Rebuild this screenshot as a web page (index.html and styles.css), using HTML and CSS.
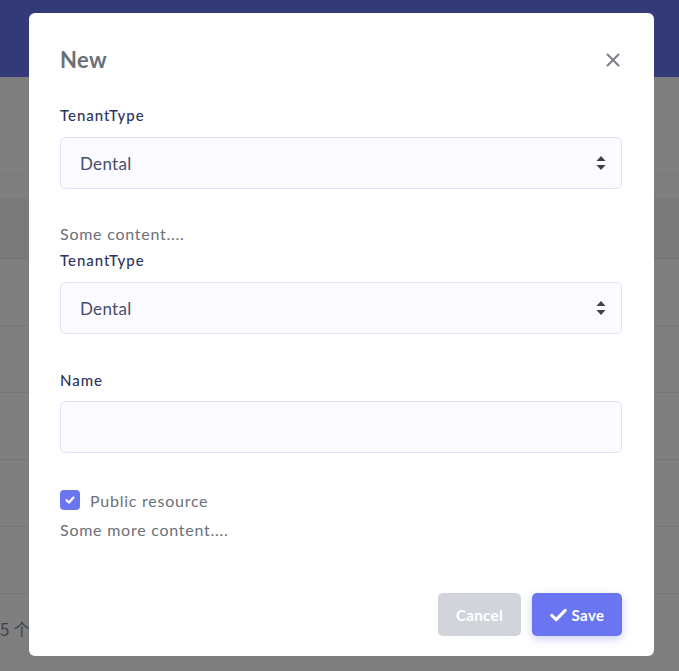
FILE: index.html
```html
<!DOCTYPE html>
<html lang="en">
<head>
<meta charset="utf-8">
<title>New</title>
<link rel="stylesheet" href="styles.css">
</head>
<body>
<div class="page">
  <div class="topbar"></div>
  <div class="table">
    <div class="row r1"></div>
    <div class="row r2"></div>
    <div class="row head"></div>
    <div class="row"></div>
    <div class="row"></div>
    <div class="row"></div>
    <div class="row"></div>
    <div class="row"></div>
    <div class="footer">5 个</div>
  </div>
</div>

<div class="modal">
  <div class="modal-header">
    <h2 class="modal-title">New</h2>
    <button class="close" aria-label="Close">
      <svg width="14" height="14" viewBox="0 0 14 14"><path d="M1.5 1.5 L12.5 12.5 M12.5 1.5 L1.5 12.5" stroke="#7a7f86" stroke-width="2" stroke-linecap="round"/></svg>
    </button>
  </div>
  <div class="modal-body">
    <label class="label">TenantType</label>
    <div class="select">
      <span>Dental</span>
      <svg class="arrows" width="10" height="16" viewBox="0 0 10 16"><path d="M5 1 L9.5 6 H0.5 Z M5 15 L9.5 10 H0.5 Z" fill="#3d4048"/></svg>
    </div>
    <p class="content first">Some content....</p>
    <label class="label">TenantType</label>
    <div class="select">
      <span>Dental</span>
      <svg class="arrows" width="10" height="16" viewBox="0 0 10 16"><path d="M5 1 L9.5 6 H0.5 Z M5 15 L9.5 10 H0.5 Z" fill="#3d4048"/></svg>
    </div>
    <label class="label name-label">Name</label>
    <div class="input"></div>
    <div class="check-row">
      <span class="checkbox">
        <svg width="12" height="12" viewBox="0 0 12 12"><path d="M2.5 6.2 L5 8.5 L9.5 3.5" stroke="#fff" stroke-width="2.2" fill="none" stroke-linecap="round" stroke-linejoin="round"/></svg>
      </span>
      <span class="check-label">Public resource</span>
    </div>
    <p class="content more">Some more content....</p>
  </div>
  <div class="modal-footer">
    <button class="btn cancel">Cancel</button>
    <button class="btn save">
      <svg width="17" height="14" viewBox="0 0 17 14"><path d="M1.8 7.4 L6.2 11.6 L15.2 2.4" stroke="#fff" stroke-width="3" fill="none" stroke-linecap="round" stroke-linejoin="round"/></svg>
      Save
    </button>
  </div>
</div>
</body>
</html>
```

FILE: styles.css
```css
* { box-sizing: border-box; }
html, body {
  margin: 0;
  padding: 0;
  height: 100%;
  font-family: Lato, "Noto Sans", sans-serif;
}
body {
  background: #7f7f7f;
  overflow: hidden;
}
.page {
  height: 671px;
  background: #7f7f7f;
}
.topbar {
  height: 77px;
  background: #343a78;
}
.table {
  display: flex;
  flex-direction: column;
}
.row {
  height: 67px;
  border-bottom: 1px solid #767676;
}
.row.r1 { height: 99px; border-bottom: 1px solid #7b7b7b; }
.row.r2 { height: 22px; border-bottom: none; }
.row.head { height: 61px; background: #7a7a7a; }
.footer {
  padding-top: 22px;
  font-size: 17px;
  color: #3e4450;
  font-family: "Noto Sans CJK SC", Lato, sans-serif;
}

.modal {
  position: absolute;
  left: 29px;
  top: 13px;
  width: 625px;
  height: 643px;
  background: #fff;
  border-radius: 6px;
  padding: 32px 32px 20px 31px;
  display: flex;
  flex-direction: column;
}
.modal-header {
  display: flex;
  align-items: center;
  justify-content: space-between;
  height: 30px;
}
.modal-title {
  margin: 0;
  font-size: 22px;
  font-weight: 700;
  color: #6b7079;
  line-height: 30px;
  letter-spacing: 0.4px;
}
.close {
  border: 0;
  background: none;
  padding: 0;
  margin-right: 1px;
  width: 16px;
  height: 16px;
  display: flex;
  align-items: center;
  justify-content: center;
  cursor: pointer;
}
.modal-body {
  display: flex;
  flex-direction: column;
  padding-top: 30px;
}
.label {
  display: block;
  font-size: 15px;
  line-height: 20px;
  font-weight: 500;
  color: #2e3460;
  letter-spacing: 0.95px;
  margin-bottom: 12px;
}
.select, .input {
  height: 52px;
  background: #fafaff;
  border: 1px solid #e3e3f8;
  border-radius: 5px;
}
.select {
  display: flex;
  align-items: center;
  justify-content: space-between;
  padding: 0 15px 0 19px;
  font-size: 17px;
  letter-spacing: 0.3px;
  color: #474d6e;
}
.arrows { display: block; }
.content {
  margin: 0;
  font-size: 16px;
  line-height: 24px;
  letter-spacing: 0.75px;
  color: #6c7078;
}
.content.first {
  margin-top: 33px;
  margin-bottom: 4px;
}
.name-label {
  margin-top: 36px;
  margin-bottom: 11px;
}
.input { height: 52px; }
.check-row {
  display: flex;
  align-items: center;
  gap: 10px;
  margin-top: 35px;
  height: 24px;
}
.checkbox {
  width: 20px;
  height: 20px;
  border-radius: 4px;
  background: #6a76f0;
  display: flex;
  align-items: center;
  justify-content: center;
}
.check-label {
  font-size: 16px;
  letter-spacing: 0.75px;
  color: #6c7078;
}
.content.more {
  margin-top: 6px;
}
.modal-footer {
  margin-top: auto;
  display: flex;
  justify-content: flex-end;
  gap: 11px;
}
.btn {
  height: 43px;
  border: 0;
  border-radius: 5px;
  color: #fff;
  font-family: Lato, "Noto Sans", sans-serif;
  font-size: 15px;
  font-weight: 700;
  letter-spacing: 0.4px;
  display: flex;
  align-items: center;
  justify-content: center;
  gap: 5px;
}
.cancel {
  width: 83px;
  background: #d1d5db;
}
.save {
  width: 90px;
  background: #6a76f1;
  box-shadow: 0 3px 8px rgba(106, 118, 241, 0.35);
}
```
